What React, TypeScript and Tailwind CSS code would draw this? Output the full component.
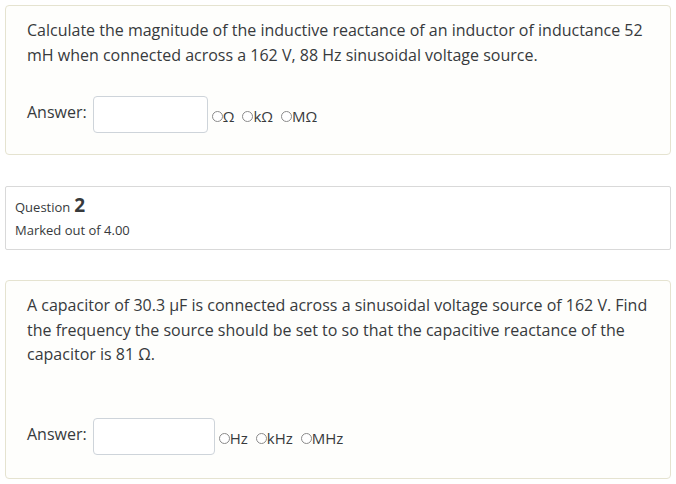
import React from "react";

const font = { fontFamily: "'Open Sans', 'Noto Sans', sans-serif" };

const Unit = ({ label }: { label: string }) => (
    <span className="inline-flex items-center">
        <span className="inline-block w-[11px] h-[11px] rounded-full border border-[#8a8a8a] bg-white" />
        <span>{label}</span>
    </span>
);

const AnswerRow = ({ units, inputWidth }: { units: string[]; inputWidth: string }) => (
    <div className="flex items-center">
        <span className="text-[16px] text-[#373a3c] mb-[5px]">Answer:</span>
        <input
            type="text"
            className={`${inputWidth} h-[37px] ml-[6px] mr-[4px] border border-[#ced4da] rounded-[4px] bg-white outline-none`}
        />
        <div className="flex items-center gap-[8px] text-[15px] text-[#373a3c] mt-[4px]">
            {units.map((u) => (
                <Unit key={u} label={u} />
            ))}
        </div>
    </div>
);

export default function App() {
    return (
        <div className="w-[676px] h-[484px] bg-white px-[5px] pt-[5px]" style={font}>
            {/* Question 1 formulation */}
            <div className="border border-[#e5e3d0] rounded-[4px] bg-[#fefefc] pl-[21px] pr-[16px] pt-[12px] pb-[21px]">
                <p className="text-[16px] leading-[25px] text-[#373a3c]">
                    Calculate the magnitude of the inductive reactance of an inductor of inductance 52 mH when
                    connected across a 162 V, 88 Hz sinusoidal voltage source.
                </p>
                <div className="mt-[28px]">
                    <AnswerRow units={["Ω", "kΩ", "MΩ"]} inputWidth="w-[115px]" />
                </div>
            </div>

            {/* Question 2 info */}
            <div className="mt-[31px] border border-[#d9d9d9] rounded-[2px] bg-white pl-[9px] pt-[4px] pb-[8px] text-[#373a3c]">
                <div className="flex items-baseline h-[28px]">
                    <span className="text-[13px]">Question</span>
                    <span className="text-[19px] font-bold ml-[4px]">2</span>
                </div>
                <div className="text-[13px] leading-[22px]">Marked out of 4.00</div>
            </div>

            {/* Question 2 formulation */}
            <div className="mt-[30px] border border-[#e5e3d0] rounded-[4px] bg-[#fefefc] pl-[21px] pr-[16px] pt-[12px] pb-[23px]">
                <p className="text-[16px] leading-[24.5px] text-[#373a3c]">
                    A capacitor of 30.3 μF is connected across a sinusoidal voltage source of 162 V. Find the
                    frequency the source should be set to so that the capacitive reactance of the capacitor is 81 Ω.
                </p>
                <div className="mt-[51px]">
                    <AnswerRow units={["Hz", "kHz", "MHz"]} inputWidth="w-[122px]" />
                </div>
            </div>
        </div>
    );
}
